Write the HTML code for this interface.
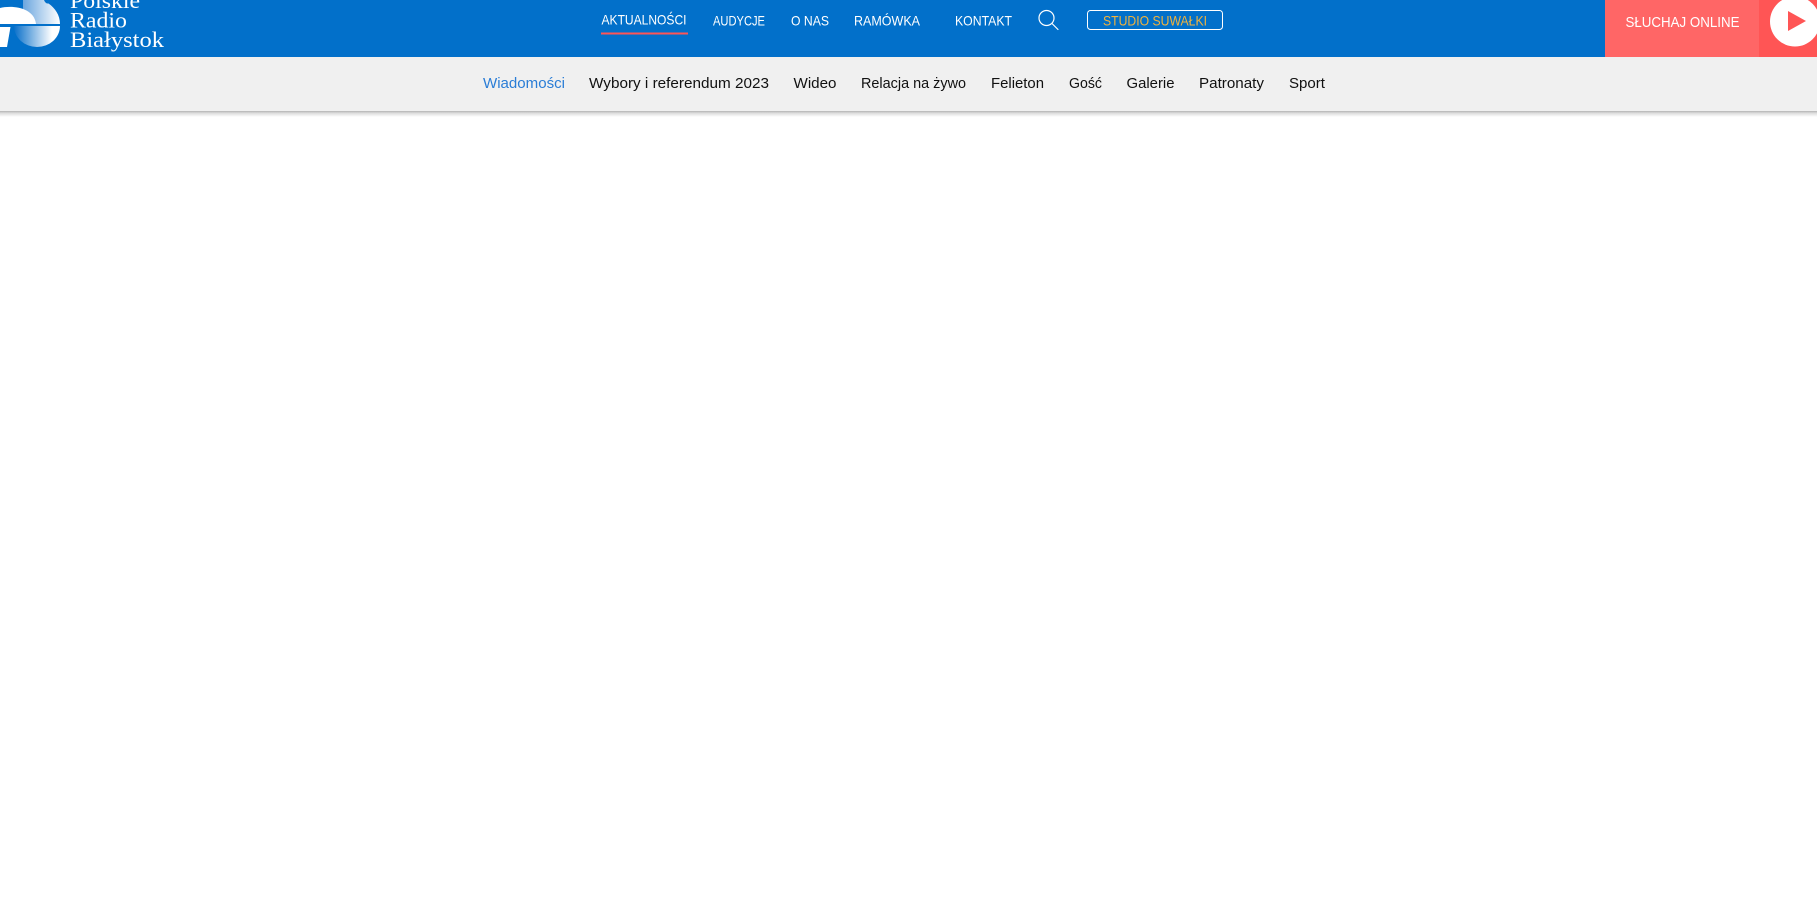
<!DOCTYPE html>
<html lang="pl">
<head>
<meta charset="utf-8">
<title>Polskie Radio Białystok</title>
<style>
html,body{margin:0;padding:0;background:#fff;width:1817px;height:916px;overflow:hidden}
svg{position:absolute;left:0;top:0;display:block}
.n{font-family:"Liberation Sans",sans-serif;font-size:14px;fill:#fff}
.s{font-family:"Liberation Sans",sans-serif;font-size:14.5px;fill:#111}
.l{font-family:"Liberation Serif",serif;font-size:22px;fill:#fff}
</style>
</head>
<body>
<svg width="1817" height="916" viewBox="0 0 1817 916" xmlns="http://www.w3.org/2000/svg">
<defs>
<linearGradient id="g1" x1="14" x2="52" y1="0" y2="0" gradientUnits="userSpaceOnUse"><stop offset="0" stop-color="#0a70ca"/><stop offset="1" stop-color="#fff"/></linearGradient>
<linearGradient id="g2" x1="20" x2="60" y1="0" y2="0" gradientUnits="userSpaceOnUse"><stop offset="0" stop-color="#5f9fdc"/><stop offset="1" stop-color="#fff"/></linearGradient>
<linearGradient id="sh" x1="0" x2="0" y1="0" y2="1"><stop offset="0" stop-color="#b4b4b4"/><stop offset="0.35" stop-color="#dcdcdc"/><stop offset="1" stop-color="#fff"/></linearGradient>
</defs>
<rect width="1817" height="916" fill="#fff"/>
<rect y="111" width="1817" height="6" fill="url(#sh)"/>
<rect y="57" width="1817" height="54" fill="#f0f0f0"/>
<rect width="1817" height="57" fill="#0270ca"/>

<!-- logo -->
<path d="M23 0H44Q45.500 4 48.500 3.500C55 8 60 15 60 24H23Z" fill="url(#g2)"/>
<path d="M14 26H60A23 21 0 0 1 14 26Z" fill="url(#g1)"/>
<path d="M0 8C12 5 34 7 36 24H0Z" fill="#fff"/>
<path d="M0 27H10.500L7 47H0Z" fill="#fff"/>
<rect y="24" width="60" height="2" fill="#0270ca"/>
<text class="l" x="70" y="8" textLength="70" lengthAdjust="spacingAndGlyphs">Polskie</text>
<text class="l" x="70" y="27.500" textLength="57" lengthAdjust="spacingAndGlyphs">Radio</text>
<text class="l" x="70" y="47" textLength="94" lengthAdjust="spacingAndGlyphs">Białystok</text>

<!-- top nav -->
<text class="n" x="601.500" y="24.500" textLength="85" lengthAdjust="spacingAndGlyphs">AKTUALNOŚCI</text>
<rect x="601" y="32.500" width="87" height="2" fill="#ff5555"/>
<text class="n" x="713" y="25.500" textLength="52" lengthAdjust="spacingAndGlyphs">AUDYCJE</text>
<text class="n" x="791" y="25.500" textLength="38" lengthAdjust="spacingAndGlyphs">O NAS</text>
<text class="n" x="854" y="25.500" textLength="66" lengthAdjust="spacingAndGlyphs">RAMÓWKA</text>
<text class="n" x="955" y="25.500" textLength="57" lengthAdjust="spacingAndGlyphs">KONTAKT</text>
<g fill="none" stroke="#fff" stroke-width="1.200" stroke-linecap="round">
<circle cx="1046.500" cy="18" r="7.500"/>
<path d="M1052 23.500L1058 29.500"/>
</g>
<rect x="1087.500" y="10.500" width="135" height="19" rx="3" fill="none" stroke="#fff" stroke-width="1"/>
<text class="n" x="1103" y="25.500" textLength="104" lengthAdjust="spacingAndGlyphs" style="fill:#f2b33d">STUDIO SUWAŁKI</text>

<!-- listen -->
<rect x="1605" width="154" height="57" fill="#ff6666"/>
<rect x="1759" width="58" height="57" fill="#ff5555"/>
<text x="1625.500" y="27" textLength="114" lengthAdjust="spacingAndGlyphs" font-family="Liberation Sans, sans-serif" font-size="15" fill="#fff">SŁUCHAJ ONLINE</text>
<circle cx="1795" cy="21.500" r="25" fill="#fff"/>
<path d="M1788 11L1806 21L1788 31Z" fill="#ff5555"/>

<!-- sub nav -->
<text class="s" x="483" y="88" textLength="82" lengthAdjust="spacingAndGlyphs" style="fill:#2a7dd6">Wiadomości</text>
<text class="s" x="589" y="88" textLength="180" lengthAdjust="spacingAndGlyphs">Wybory i referendum 2023</text>
<text class="s" x="793.500" y="88" textLength="43" lengthAdjust="spacingAndGlyphs">Wideo</text>
<text class="s" x="861" y="88" textLength="105" lengthAdjust="spacingAndGlyphs">Relacja na żywo</text>
<text class="s" x="991" y="88" textLength="53" lengthAdjust="spacingAndGlyphs">Felieton</text>
<text class="s" x="1069" y="88" textLength="33" lengthAdjust="spacingAndGlyphs">Gość</text>
<text class="s" x="1126.500" y="88" textLength="48" lengthAdjust="spacingAndGlyphs">Galerie</text>
<text class="s" x="1199" y="88" textLength="65" lengthAdjust="spacingAndGlyphs">Patronaty</text>
<text class="s" x="1289" y="88" textLength="36" lengthAdjust="spacingAndGlyphs">Sport</text>
</svg>
</body>
</html>
